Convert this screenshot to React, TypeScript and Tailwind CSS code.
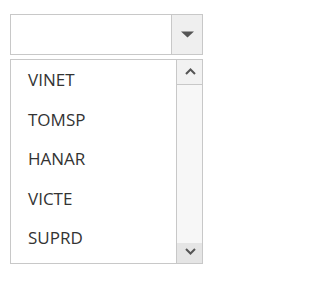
const items = ['VINET', 'TOMSP', 'HANAR', 'VICTE', 'SUPRD'];

export default function App() {
  return (
    <div className="w-[216px] h-[282px] bg-white pt-[14px] pl-[10px]" style={{ fontFamily: '"Open Sans", "Noto Sans", sans-serif' }}>
      {/* combo input */}
      <div className="flex w-[193px] h-[41px] border border-[#c8c8c8] bg-white">
        <div className="flex-1" />
        <div className="w-[31px] h-full border-l border-[#c8c8c8] bg-[#efefef] flex items-center justify-center">
          <svg width="13" height="7" viewBox="0 0 13 7" className="ml-[1px]">
            <path d="M0 0.5 L13 0.5 L6.5 6.5 Z" fill="#555" />
          </svg>
        </div>
      </div>

      {/* popup list */}
      <div className="mt-[4px] flex w-[193px] h-[205px] border border-[#c8c8c8] bg-white">
        <ul className="flex-1 overflow-hidden">
          {items.map(it => (
            <li key={it} className="h-[39.5px] flex items-center pl-[17px] text-[17px] text-[#333] leading-none">
              {it}
            </li>
          ))}
        </ul>
        <div className="w-[26px] h-full border-l border-[#c8c8c8] bg-[#f7f7f7] flex flex-col">
          <div className="h-[25px] border-b border-[#c8c8c8] bg-[#f2f2f2] flex items-center justify-center">
            <svg width="11" height="7" viewBox="0 0 11 7" className="ml-[1px] mt-[-1px]">
              <path d="M1 6 L5.5 1.5 L10 6" fill="none" stroke="#555" strokeWidth="2" />
            </svg>
          </div>
          <div className="flex-1" />
          <div className="h-[20px] bg-[#e5e5e5] flex items-center justify-center">
            <svg width="11" height="7" viewBox="0 0 11 7" className="ml-[1px] mt-[-3px]">
              <path d="M1 1 L5.5 5.5 L10 1" fill="none" stroke="#555" strokeWidth="2" />
            </svg>
          </div>
        </div>
      </div>
    </div>
  );
}
